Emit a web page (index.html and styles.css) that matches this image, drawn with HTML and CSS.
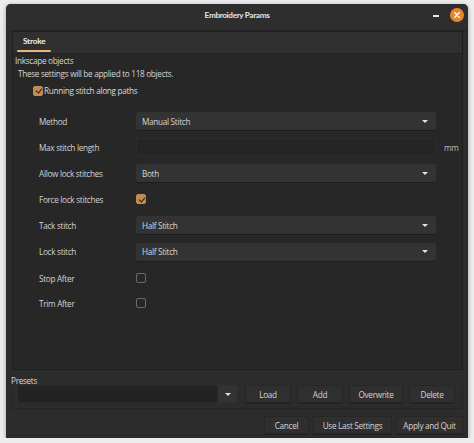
FILE: index.html
```html
<!DOCTYPE html>
<html lang="en">
<head>
  <meta charset="UTF-8">
  <title>Embroidery Params</title>
  <link rel="stylesheet" href="styles.css">
</head>
<body>
  <div class="window">
    <div class="titlebar">
      <span></span>
      <span class="title">Embroidery Params</span>
      <div class="controls">
        <span class="minimize"></span>
        <span class="close">
          <svg width="14" height="14" viewBox="0 0 14 14"><circle cx="7" cy="7" r="7" fill="#e8852c"/><path d="M4.8 4.8l4.4 4.4M9.2 4.8l-4.4 4.4" stroke="#fff" stroke-width="1.4" stroke-linecap="round"/></svg>
        </span>
      </div>
    </div>

    <div class="notebook">
      <div class="tabs">
        <div class="tab active">Stroke</div>
      </div>
      <div class="page">
        <div class="group-title">Inkscape objects</div>
        <div class="summary">These settings will be applied to 118 objects.</div>
        <label class="toggle"><span class="check on"></span>Running stitch along paths</label>

        <div class="params">
          <div class="row">
            <span class="name">Method</span>
            <div class="combo">Manual Stitch<span class="arrow"></span></div>
          </div>
          <div class="row">
            <span class="name">Max stitch length</span>
            <div class="entry"></div>
            <span class="unit">mm</span>
          </div>
          <div class="row">
            <span class="name">Allow lock stitches</span>
            <div class="combo">Both<span class="arrow"></span></div>
          </div>
          <div class="row">
            <span class="name">Force lock stitches</span>
            <span class="check on"></span>
          </div>
          <div class="row">
            <span class="name">Tack stitch</span>
            <div class="combo">Half Stitch<span class="arrow"></span></div>
          </div>
          <div class="row tall">
            <span class="name">Lock stitch</span>
            <div class="combo">Half Stitch<span class="arrow"></span></div>
          </div>
          <div class="row">
            <span class="name">Stop After</span>
            <span class="check"></span>
          </div>
          <div class="row short">
            <span class="name">Trim After</span>
            <span class="check"></span>
          </div>
        </div>
      </div>
    </div>

    <div class="presets">
      <div class="presets-label">Presets</div>
      <div class="presets-row">
        <div class="preset-combo">
          <div class="preset-entry"></div>
          <div class="preset-arrow"><span class="arrow"></span></div>
        </div>
        <button class="btn load">Load</button>
        <button class="btn add">Add</button>
        <button class="btn overwrite">Overwrite</button>
        <button class="btn delete">Delete</button>
      </div>
    </div>

    <div class="actions">
      <button class="btn cancel">Cancel</button>
      <button class="btn last">Use Last Settings</button>
      <button class="btn apply">Apply and Quit</button>
    </div>
  </div>
</body>
</html>
```

FILE: styles.css
```css
body { margin: 0; background: #ececec; font-family: "Open Sans", Lato, sans-serif; font-size: 8.2px; letter-spacing: -0.3px; line-height: 11px; color: #d8d8d8; }
.window { margin: 4px 0 0 6px; width: 462px; height: 434px; background: #2c2c2c; border-radius: 5px 5px 0 0; box-shadow: 0 1px 4px rgba(0,0,0,0.35); display: flex; flex-direction: column; }

.titlebar { height: 25px; display: grid; grid-template-columns: 1fr auto 1fr; align-items: center; background: #2e2e2e; border-radius: 5px 5px 0 0; border-bottom: 1px solid #252525; padding-bottom: 1px; }
.title { font-family: Lato, "Open Sans", sans-serif; font-weight: bold; color: #e6e6e6; font-size: 8.2px; letter-spacing: -0.35px; padding-bottom: 3px; }
.controls { display: flex; justify-content: flex-end; align-items: center; gap: 11px; padding: 0 4px 3px 0; }
.minimize { width: 6px; height: 2px; background: #e4e4e4; margin-top: 2px; }
.close { display: flex; }

.notebook { margin: 0 5px 0 6px; height: 339px; box-sizing: border-box; display: flex; flex-direction: column; border: 1px solid #1f1f1f; background: #272727; }
.tabs { height: 21px; background: #2f2f2f; display: flex; padding-left: 4px; border-bottom: 1px solid #222; }
.tab { padding: 4px 6px 0; font-family: Lato, "Open Sans", sans-serif; font-weight: bold; font-size: 8.2px; letter-spacing: -0.2px; color: #f0f0f0; position: relative; }
.tab.active::after { content: ""; position: absolute; left: 0; right: 0; bottom: 1px; height: 2px; background: #e9b37a; border-radius: 1px; }
.page { padding: 1px 0 0 2px; }
.group-title { color: #d6d6d6; }
.summary { padding: 2px 0 0 3px; color: #d6d6d6; }
.toggle { display: flex; align-items: center; gap: 1px; margin: 6px 0 0 18px; color: #dcdcdc; }

.check { display: inline-block; width: 10px; height: 10px; border: 1px solid #6a6a6a; border-radius: 2px; box-sizing: border-box; }
.check.on { background: #c28b52; border-color: #c28b52; position: relative; }
.check.on::after { content: ""; position: absolute; left: 2.5px; top: 0.5px; width: 3px; height: 5px; border: solid #2a1f14; border-width: 0 1.6px 1.6px 0; transform: rotate(40deg); }

.params { padding: 12px 0 0 24px; display: flex; flex-direction: column; }
.row { display: flex; align-items: center; height: 26px; }
.row.tall { height: 27px; }
.row.short { height: 24px; }
.name { width: 97px; color: #d2d2d2; }
.combo, .entry { width: 300px; height: 18px; box-sizing: border-box; border-radius: 2px; display: flex; align-items: center; padding: 0 8px 0 6px; }
.combo { background: #333333; color: #d6d6d6; justify-content: space-between; box-shadow: 0 1px 0 #1d1d1d; }
.entry { background: #252525; border: 1px solid #2c2c2c; }
.unit { margin-left: 8px; color: #bdbdbd; }
.arrow { width: 0; height: 0; border-left: 3px solid transparent; border-right: 3px solid transparent; border-top: 3px solid #e0e0e0; }

.presets { margin: 5px 5px 0 5px; }
.presets-label { color: #d6d6d6; }
.presets-row { display: flex; align-items: center; gap: 6px; margin-top: -1px; padding: 0 5px 5px 5px; border: 1px solid #262626; border-top: none; }
.preset-combo { display: flex; width: 220px; height: 18px; margin-right: 2px; }
.preset-entry { flex: 1; background: #222; border: 1px solid #2b2b2b; border-radius: 2px 0 0 2px; }
.preset-arrow { width: 19px; background: #333; display: flex; align-items: center; justify-content: center; border-radius: 0 2px 2px 0; }
.btn { height: 18px; padding: 0; background: #2f2f2f; border: 1px solid #262626; border-radius: 2px; color: #d4d4d4; font-family: inherit; font-size: 8.2px; letter-spacing: -0.3px; box-shadow: 0 1px 0 #222; }
.load, .add { width: 46px; }
.overwrite { width: 54px; }
.delete { width: 46px; }

.actions { display: flex; justify-content: flex-end; gap: 4px; margin-top: 7px; padding-right: 5px; }
.cancel { width: 45px; }
.last { width: 79px; }
.apply { width: 67px; }
```
